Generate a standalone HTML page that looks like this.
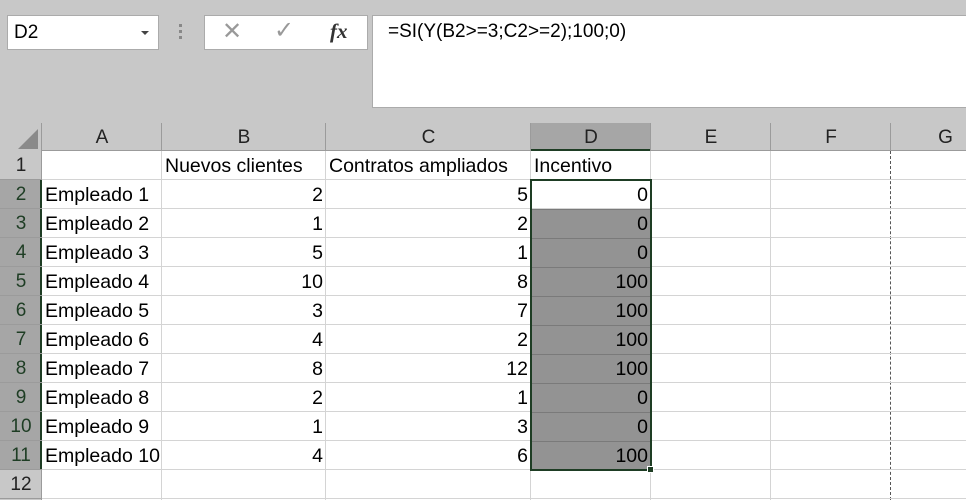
<!DOCTYPE html><html><head><meta charset="utf-8"><style>
body{margin:0;width:966px;height:500px;overflow:hidden;background:#c8c8c8;font-family:"Liberation Sans",sans-serif;position:relative}
.a{position:absolute;box-sizing:border-box}
.c{position:absolute;box-sizing:border-box;font-size:19.5px;line-height:30px;color:#000;white-space:nowrap;overflow:hidden;padding:0 3px}
.h{position:absolute;font-size:19px;color:#222;text-align:center;line-height:30px}
</style></head><body>
<div class="a" style="left:7px;top:15px;width:152px;height:35px;background:#fff;border:1px solid #ababab"></div>
<div class="a" style="left:14px;top:15px;line-height:36px;font-size:19px">D2</div>
<div class="a" style="left:141px;top:31px;width:0;height:0;border-left:4px solid transparent;border-right:4px solid transparent;border-top:4px solid #444"></div>
<div class="a" style="left:179px;top:24px;width:3px;height:3px;background:#888;box-shadow:0 6px #888,0 12px #888"></div>
<div class="a" style="left:204px;top:15px;width:164px;height:35px;background:#fff;border:1px solid #ababab"></div>
<div class="a" style="left:222px;top:23px;font-size:24px;color:#999;line-height:18px">✕</div>
<div class="a" style="left:274px;top:21px;font-size:24px;color:#999;line-height:20px">✓</div>
<div class="a" style="left:330px;top:19px;font-size:21px;font-style:italic;font-weight:bold;font-family:'Liberation Serif',serif;color:#333">fx</div>
<div class="a" style="left:372px;top:15px;width:600px;height:93px;background:#fff;border:1px solid #ababab"></div>
<div class="a" style="left:388px;top:21px;font-size:19px">=SI(Y(B2&gt;=3;C2&gt;=2);100;0)</div>
<div class="a" style="left:0;top:123px;width:966px;height:377px;background:#fff"></div>
<div class="a" style="left:0;top:123px;width:966px;height:28px;background:#c8c8c8;border-bottom:1px solid #9b9b9b"></div>
<div class="a" style="left:0;top:123px;width:42px;height:377px;background:#c8c8c8;border-right:1px solid #9b9b9b"></div>
<div class="a" style="left:531px;top:123px;width:120px;height:28px;background:#a6a6a6;border-bottom:2px solid #1e3d24"></div>
<div class="a" style="left:0;top:180px;width:42px;height:290px;background:#a6a6a6;border-right:2px solid #1e3d24"></div>
<div class="a" style="left:18px;top:129px;width:0;height:0;border-left:20px solid transparent;border-bottom:20px solid #8a8a8a"></div>
<div id="g"></div>
<div class="a" style="left:530px;top:179px;width:122px;height:292px;border:2px solid #1e3d24"></div>
<div class="a" style="left:647px;top:466px;width:7px;height:7px;background:#1e3d24;border:1px solid #fff"></div>
<script>
var cols=[42,162,326,531,651,771,891,1000],L="ABCDEFG",g="";
for(var i=0;i<7;i++){g+='<div class="h" style="left:'+cols[i]+'px;top:123px;width:'+(cols[i+1]-cols[i])+'px">'+L[i]+'</div>';
if(i>0)g+='<div class="a" style="left:'+(cols[i]-1)+'px;top:123px;width:1px;height:28px;background:#9b9b9b"></div>';
g+='<div class="a" style="left:'+(cols[i+1]-1)+'px;top:151px;width:1px;height:349px;'+(i==5?'border-left:1px dashed #555':'background:#d4d4d4')+'"></div>';}
var d=[["","Nuevos clientes","Contratos ampliados","Incentivo"]];
var b=[2,1,5,10,3,4,8,2,1,4],c=[5,2,1,8,7,2,12,1,3,6],v=[0,0,0,100,100,100,100,0,0,100];
for(var r=0;r<12;r++){var y=151+r*29;
g+='<div class="h" style="left:0;top:'+y+'px;width:42px;line-height:30px;'+(r>=1&&r<=10?'color:#1e3d24':'')+'">'+(r+1)+'</div>';
g+='<div class="a" style="left:42px;top:'+(y+28)+'px;width:924px;height:1px;background:#d4d4d4"></div>';
g+='<div class="a" style="left:0;top:'+(y+28)+'px;width:42px;height:1px;background:#9b9b9b"></div>';
if(r>=2&&r<=10)g+='<div class="a" style="left:531px;top:'+y+'px;width:120px;height:29px;background:#939393;border-top:1px solid #7a7a7a"></div>';
if(r==0){for(var k=1;k<4;k++)g+='<div class="c" style="left:'+cols[k]+'px;top:'+y+'px;width:'+(cols[k+1]-cols[k])+'px">'+d[0][k]+'</div>';}
else if(r<=10){var n=r-1;
g+='<div class="c" style="left:42px;top:'+y+'px;width:123px">Empleado '+r+'</div>';
g+='<div class="c" style="left:162px;top:'+y+'px;width:164px;text-align:right">'+b[n]+'</div>';
g+='<div class="c" style="left:326px;top:'+y+'px;width:205px;text-align:right">'+c[n]+'</div>';
g+='<div class="c" style="left:531px;top:'+y+'px;width:120px;text-align:right">'+v[n]+'</div>';}}
document.getElementById('g').innerHTML=g;
</script>
</body></html>
